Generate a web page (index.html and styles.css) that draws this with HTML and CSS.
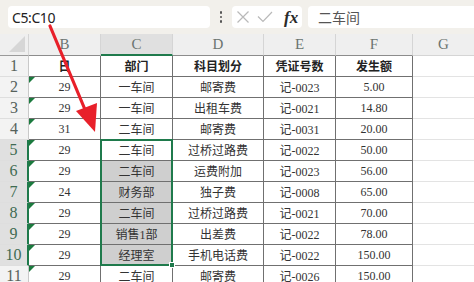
FILE: index.html
```html
<!DOCTYPE html>
<html>
<head>
<meta charset="utf-8">
<link rel="stylesheet" href="styles.css">
</head>
<body>
<div class="toolbar">
  <div class="namebox">C5:C10</div>
  <div class="dots"><i></i><i></i><i></i></div>
  <div class="fnbtns">
    <svg class="ico" width="14" height="14" viewBox="0 0 14 14"><path d="M1.5 1.5L12.5 12.5M12.5 1.5L1.5 12.5" stroke="#b9b9b9" stroke-width="1.2" fill="none"/></svg>
    <svg class="ico" width="16" height="14" viewBox="0 0 16 14"><path d="M1 6.5L6 11.5L15 2" stroke="#b9b9b9" stroke-width="1.2" fill="none"/></svg>
    <span class="fx">fx</span>
  </div>
  <div class="formula">二车间</div>
</div>
<div class="sheet">
  <div class="corner"><svg width="16" height="16" viewBox="0 0 16 16"><path d="M16 0V16H0Z" fill="#d6d6d6"/></svg></div>
  <div class="ch">B</div><div class="ch sel-col">C</div><div class="ch">D</div><div class="ch">E</div><div class="ch">F</div><div class="ch g">G</div>

  <div class="rh">1</div><div class="c b bold">日</div><div class="c bold">部门</div><div class="c bold">科目划分</div><div class="c bold">凭证号数</div><div class="c bold">发生额</div><div class="c g"></div>
  <div class="rh">2</div><div class="c b tri">29</div><div class="c">一车间</div><div class="c">邮寄费</div><div class="c">记-0023</div><div class="c">5.00</div><div class="c g"></div>
  <div class="rh">3</div><div class="c b tri">29</div><div class="c">一车间</div><div class="c">出租车费</div><div class="c">记-0021</div><div class="c">14.80</div><div class="c g"></div>
  <div class="rh">4</div><div class="c b tri">31</div><div class="c">二车间</div><div class="c">邮寄费</div><div class="c">记-0031</div><div class="c">20.00</div><div class="c g"></div>
  <div class="rh on">5</div><div class="c b tri">29</div><div class="c active">二车间<div class="sel"><span class="handle"></span></div></div><div class="c">过桥过路费</div><div class="c">记-0022</div><div class="c">50.00</div><div class="c g"></div>
  <div class="rh on">6</div><div class="c b tri">29</div><div class="c hl">二车间</div><div class="c">运费附加</div><div class="c">记-0023</div><div class="c">56.00</div><div class="c g"></div>
  <div class="rh on">7</div><div class="c b tri">24</div><div class="c hl">财务部</div><div class="c">独子费</div><div class="c">记-0008</div><div class="c">65.00</div><div class="c g"></div>
  <div class="rh on">8</div><div class="c b tri">29</div><div class="c hl">二车间</div><div class="c">过桥过路费</div><div class="c">记-0021</div><div class="c">70.00</div><div class="c g"></div>
  <div class="rh on">9</div><div class="c b tri">29</div><div class="c hl">销售1部</div><div class="c">出差费</div><div class="c">记-0022</div><div class="c">78.00</div><div class="c g"></div>
  <div class="rh on">10</div><div class="c b tri">29</div><div class="c hl">经理室</div><div class="c">手机电话费</div><div class="c">记-0022</div><div class="c">150.00</div><div class="c g"></div>
  <div class="rh">11</div><div class="c b tri">29</div><div class="c">二车间</div><div class="c">邮寄费</div><div class="c">记-0026</div><div class="c">150.00</div><div class="c g"></div>
</div>
<svg class="arrow" width="474" height="282" viewBox="0 0 474 282">
  <path d="M50 26L86 112" stroke="#e8202a" stroke-width="3.2" fill="none" stroke-linecap="round"/>
  <path d="M95 132L76 111L97 103Z" fill="#e8202a"/>
</svg>
</body>
</html>
```
FILE: styles.css
```css
* { box-sizing: border-box; }
html, body { margin: 0; padding: 0; }
body {
  width: 474px;
  height: 282px;
  overflow: hidden;
  background: #ffffff;
  position: relative;
  font-family: "Liberation Serif", "Noto Sans CJK SC", serif;
}
.toolbar {
  height: 34px;
  background: #f2f0eb;
  display: flex;
  align-items: center;
  padding-left: 8px;
}
.namebox {
  width: 202px;
  height: 22px;
  background: #ffffff;
  border-radius: 4px;
  font-family: "Noto Sans", sans-serif;
  font-size: 14px;
  letter-spacing: -0.4px;
  color: #222;
  display: flex;
  align-items: center;
  padding-left: 4px;
}
.dots {
  width: 22px;
  display: flex;
  flex-direction: column;
  align-items: center;
  gap: 2px;
}
.dots i {
  display: block;
  width: 2.5px;
  height: 2.5px;
  background: #555;
  border-radius: 1px;
}
.fnbtns {
  width: 70px;
  height: 22px;
  background: #ffffff;
  border-radius: 4px;
  display: flex;
  align-items: center;
  padding-left: 4px;
  gap: 7px;
}
.fx {
  font-family: "Liberation Serif", serif;
  font-style: italic;
  font-weight: bold;
  font-size: 17px;
  color: #2a2a2a;
  margin-left: 4px;
  line-height: 1;
}
.formula {
  flex: 1;
  height: 22px;
  margin-left: 6px;
  background: #ffffff;
  border-radius: 4px 0 0 4px;
  font-family: "Noto Sans CJK SC", sans-serif;
  font-size: 14px;
  color: #555;
  display: flex;
  align-items: center;
  padding-left: 10px;
}
.sheet {
  display: grid;
  grid-template-columns: 29px 72px 72px 91px 72px 77px 62px;
  grid-template-rows: 22px;
  grid-auto-rows: 21px;
}
.corner {
  background: #efefef;
  border-right: 1px solid #d5d5d5;
  border-bottom: 1px solid #9a9a9a;
  display: flex;
  align-items: flex-end;
  justify-content: flex-end;
  padding: 0 3px 3px 0;
}
.corner svg { display: block; }
.ch {
  background: #efefef;
  border-right: 1px solid #d5d5d5;
  border-bottom: 1px solid #8c8c8c;
  font-family: "Liberation Serif", serif;
  font-size: 15px;
  color: #6b7470;
  display: flex;
  align-items: center;
  justify-content: center;
}
.ch.g { border-bottom-color: #d5d5d5; }
.ch.sel-col {
  background: #e0e0e0;
  border-bottom: 2px solid #1f7a4c;
}
.rh {
  background: #f3f3f3;
  border-right: 1px solid #c9c9c9;
  border-bottom: 1px solid #dedede;
  font-family: "Liberation Serif", serif;
  font-size: 16px;
  color: #56625b;
  display: flex;
  align-items: center;
  justify-content: center;
}
.rh.on {
  background: #e0e0e0;
  border-right: 2px solid #1f7a4c;
  color: #3f6b52;
}
.c {
  position: relative;
  border-right: 1px solid #707070;
  border-bottom: 1px solid #707070;
  font-family: "Liberation Serif", "Noto Sans CJK SC", serif;
  font-size: 12px;
  color: #333;
  display: flex;
  align-items: center;
  justify-content: center;
  white-space: nowrap;
}
.c.bold { font-weight: bold; color: #222; }
.c.g {
  border-right: 1px solid #e3e3e3;
  border-bottom: 1px solid #e3e3e3;
}
.c.hl { background: #cfcfcf; }
.tri::before {
  content: "";
  position: absolute;
  left: 0;
  top: 0;
  border-top: 6px solid #1b7a3e;
  border-right: 6px solid transparent;
}
.sel {
  position: absolute;
  left: -1px;
  top: -1px;
  width: 73px;
  height: 127px;
  border: 2px solid #1f7a4c;
  pointer-events: none;
  z-index: 2;
}
.handle {
  position: absolute;
  right: -4px;
  bottom: -4px;
  width: 6px;
  height: 6px;
  background: #1f7a4c;
  border: 1px solid #ffffff;
}
.arrow {
  position: absolute;
  left: 0;
  top: 0;
  pointer-events: none;
  z-index: 5;
}
```
